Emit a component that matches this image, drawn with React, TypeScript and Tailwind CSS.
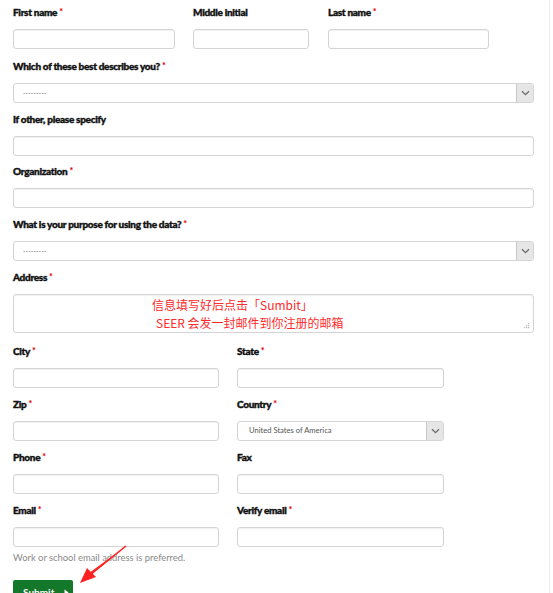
import React from "react";

const labelCls =
  "block h-[12px] leading-[12px] text-[10px] font-black text-[#111] tracking-[-0.3px] [-webkit-text-stroke:0.4px_#111] mb-[11px] whitespace-nowrap";
const inputCls =
  "block h-[20px] bg-white border border-[#d4d4d4] rounded-[3px] shadow-[inset_0_1px_1px_rgba(0,0,0,0.06)]";

function Star() {
  return <span className="text-[#d00] ml-[2px] text-[9px] align-top [-webkit-text-stroke:0px_#d00]">*</span>;
}

function Label({ text, req }: { text: string; req?: boolean }) {
  return (
    <div className={labelCls} style={{ fontFamily: "Lato, 'Open Sans', sans-serif" }}>
      {text}
      {req && <Star />}
    </div>
  );
}

function Input({ w }: { w: string }) {
  return <div className={`${inputCls} ${w}`} />;
}

function Chevron() {
  return (
    <svg width="9" height="6" viewBox="0 0 9 6" className="block">
      <path d="M1 1.2 L4.5 4.6 L8 1.2" fill="none" stroke="#6a6a6a" strokeWidth="1.3" />
    </svg>
  );
}

function Select({ w, text, textCls }: { w: string; text: string; textCls: string }) {
  return (
    <div className={`flex h-[20px] bg-white border border-[#d4d4d4] rounded-[3px] ${w}`}>
      <div className={`flex-1 flex items-center ${textCls}`}>{text}</div>
      <div className="w-[17px] h-full flex items-center justify-center bg-[#e6e6e6] border-l border-[#c8c8c8] rounded-r-[2px]">
        <Chevron />
      </div>
    </div>
  );
}

export default function App() {
  return (
    <div
      className="relative w-[553px] h-[593px] overflow-hidden bg-white"
      style={{ fontFamily: "Lato, 'Open Sans', sans-serif" }}
    >
      <div className="absolute right-[3px] top-0 bottom-0 w-px bg-[#ececec]" />
      <div className="pl-[13px] pt-[6px]">
        {/* Row 1 */}
        <div className="flex mb-[11px]">
          <div className="w-[180px]">
            <Label text="First name" req />
            <Input w="w-[162px]" />
          </div>
          <div className="w-[135px]">
            <Label text="Middle initial" />
            <Input w="w-[116px]" />
          </div>
          <div>
            <Label text="Last name" req />
            <Input w="w-[161px]" />
          </div>
        </div>

        <div className="mb-[10px]">
          <Label text="Which of these best describes you?" req />
          <Select w="w-[521px]" text="---------" textCls="pl-[9px] text-[7px] text-[#777]" />
        </div>

        <div className="mb-[9px]">
          <Label text="If other, please specify" />
          <Input w="w-[521px]" />
        </div>

        <div className="mb-[10px]">
          <Label text="Organization" req />
          <Input w="w-[521px]" />
        </div>

        <div className="mb-[10px]">
          <Label text="What is your purpose for using the data?" req />
          <Select w="w-[521px]" text="---------" textCls="pl-[9px] text-[7px] text-[#777]" />
        </div>

        <div className="mb-[12px]">
          <Label text="Address" req />
          <div className="relative w-[521px] h-[39px] bg-white border border-[#d4d4d4] rounded-[3px] shadow-[inset_0_1px_1px_rgba(0,0,0,0.06)]">
            <svg width="6" height="6" viewBox="0 0 6 6" className="absolute right-[3px] bottom-[3px]">
              <rect x="4" y="0" width="1.2" height="1.2" fill="#bbb" />
              <rect x="2" y="2" width="1.2" height="1.2" fill="#bbb" />
              <rect x="4" y="2" width="1.2" height="1.2" fill="#bbb" />
              <rect x="0" y="4" width="1.2" height="1.2" fill="#bbb" />
              <rect x="2" y="4" width="1.2" height="1.2" fill="#bbb" />
              <rect x="4" y="4" width="1.2" height="1.2" fill="#bbb" />
            </svg>
            <div
              className="absolute left-[138px] top-[1px] text-[12px] leading-[18px] text-[#ff2a2a] whitespace-nowrap"
              style={{ fontFamily: "'Noto Sans CJK SC', 'Noto Sans', sans-serif" }}
            >
              <div>信息填写好后点击「Sumbit」</div>
              <div className="pl-[4px]">SEER 会发一封邮件到你注册的邮箱</div>
            </div>
          </div>
        </div>

        {/* Two-column rows */}
        <div className="flex mb-[10px]">
          <div className="w-[224px]">
            <Label text="City" req />
            <Input w="w-[206px]" />
          </div>
          <div>
            <Label text="State" req />
            <Input w="w-[207px]" />
          </div>
        </div>

        <div className="flex mb-[10px]">
          <div className="w-[224px]">
            <Label text="Zip" req />
            <Input w="w-[206px]" />
          </div>
          <div>
            <Label text="Country" req />
            <Select
              w="w-[207px]"
              text="United States of America"
              textCls="pl-[11px] text-[7.6px] text-[#555]"
            />
          </div>
        </div>

        <div className="flex mb-[10px]">
          <div className="w-[224px]">
            <Label text="Phone" req />
            <Input w="w-[206px]" />
          </div>
          <div>
            <Label text="Fax" />
            <Input w="w-[207px]" />
          </div>
        </div>

        <div className="flex">
          <div className="w-[224px]">
            <Label text="Email" req />
            <Input w="w-[206px]" />
            <div className="mt-[5px] text-[9.4px] leading-[12px] text-[#8a8a8a] whitespace-nowrap">
              Work or school email address is preferred.
            </div>
          </div>
          <div>
            <Label text="Verify email" req />
            <Input w="w-[207px]" />
          </div>
        </div>

        <div className="mt-[16px] flex items-center w-[60px] h-[24px] bg-[#14782a] rounded-[2px] pl-[10px] text-white text-[10px] font-bold">
          <span className="mr-[10px]">Submit</span>
          <svg width="5" height="7" viewBox="0 0 5 7">
            <path d="M0.5 0.5 L4.5 3.5 L0.5 6.5 Z" fill="#fff" />
          </svg>
        </div>
      </div>

      {/* red annotation arrow */}
      <svg
        className="absolute left-0 top-0 pointer-events-none"
        width="553"
        height="593"
        viewBox="0 0 553 593"
      >
        <path d="M126 546 L92 574 L90.5 572 Z" fill="#ff2222" />
        <path d="M80 583 L87 568 L96 577 Z" fill="#ff2222" />
        <line x1="126" y1="546" x2="90" y2="575" stroke="#ff2222" strokeWidth="1.6" />
      </svg>
    </div>
  );
}
